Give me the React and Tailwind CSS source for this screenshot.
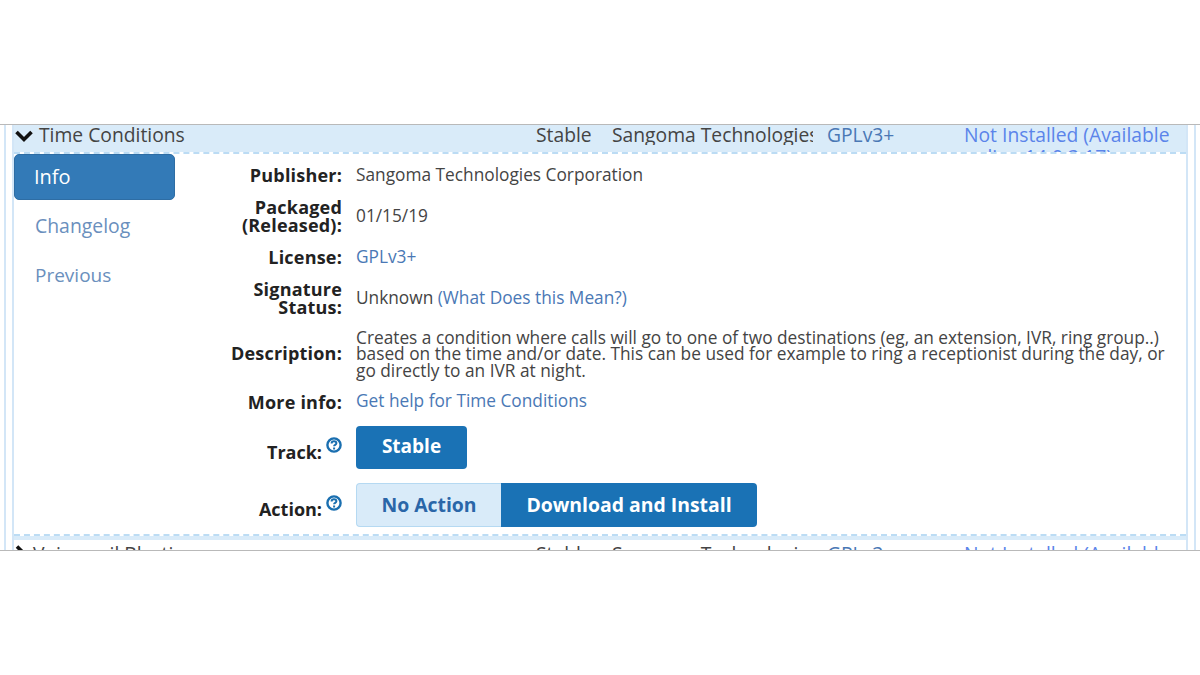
import React from 'react';

const FONT = "font-['Open_Sans','Noto_Sans',sans-serif]";

const HelpIcon = () => (
  <svg viewBox="0 0 16 16" className="w-[16px] h-[16px] shrink-0 ml-[4px] -mt-[14px]">
    <circle cx="8" cy="8" r="6.600" fill="none" stroke="#1a6fb0" strokeWidth="2.400" />
    <path d="M5.600 6.400c0-1.400 1-2.200 2.400-2.200s2.400.8 2.400 2c0 1.700-2.300 1.600-2.300 3.100" fill="none" stroke="#1a6fb0" strokeWidth="2" />
    <rect x="7.100" y="10.500" width="2" height="2" fill="#1a6fb0" />
  </svg>
);

const Row = ({ label, children, className = '', valueClass = 'leading-[16px] pb-[3px]', labelClass = 'pb-[2px]' }) => (
  <div className={`flex items-center ${className}`}>
    <div className={`w-[167px] shrink-0 pl-[40px] text-right font-bold text-[18px] leading-[18px] tracking-[0.2px] text-[#222] ${labelClass}`}>{label}</div>
    <div className={`ml-[14px] flex-1 pr-[12px] text-[17.300px] text-[#444] ${valueClass}`}>{children}</div>
  </div>
);

// 모듈 헤더 한 줄
const ModuleHeader = ({ name, license, expanded }) => (
  <div className={`flex items-start h-[27px] overflow-hidden text-[19.300px] leading-[20px] text-[#444] ${expanded ? 'bg-[#d9ebf9]' : 'bg-white'}`}>
    <div className="w-[522px] shrink-0 flex items-center">
      {expanded ? (
        <svg viewBox="0 0 20 14" className="w-[20px] h-[14px] shrink-0 mt-[1px] mr-[5px]">
          <path d="M2.500 3 10 10.500 17.500 3" fill="none" stroke="#111" strokeWidth="3.600" />
        </svg>
      ) : (
        <svg viewBox="0 0 14 20" className="w-[14px] h-[20px] shrink-0 mr-[5px]">
          <path d="M3 2.500 10.500 10 3 17.500" fill="none" stroke="#111" strokeWidth="3.600" />
        </svg>
      )}
      <span>{name}</span>
    </div>
    <div className="w-[76px] shrink-0">Stable</div>
    <div className="w-[201px] shrink-0 whitespace-nowrap overflow-hidden">Sangoma Technologies Corporation</div>
    <div className="w-[137px] shrink-0 ml-[14px] text-[#4a78b5]">{license}</div>
    <div className="w-[216px] shrink-0 -mt-[1px] leading-[22px] text-[#5b84ea]">Not Installed (Available online 14.0.3.17)</div>
  </div>
);

export default function App() {
  return (
    <div className={`h-[675px] bg-white pt-[124px] ${FONT}`}>
      <div className="h-[427px] border-y border-[#b9b9b9] overflow-hidden px-[4px]">
        <div className="h-full border-x-2 border-[#d3e6f7] px-[6px]">
          <div className="h-full border-x-2 border-[#d3e6f7]">
            <ModuleHeader name="Time Conditions" license="GPLv3+" expanded />
            <div className="flex h-[384px] border-t-2 border-b-2 border-dashed border-[#bcdcf4]">
              {/* 좌측 탭 */}
              <div className="w-[161px] shrink-0 text-[19.400px]">
                <div className="h-[46px] rounded-[5px] bg-[#337ab7] border border-[#2e6da4] text-white text-[20px] font-medium flex items-center pl-[19px] pb-[1px]">Info</div>
                <div className="h-[51px] flex items-center pl-[21px] text-[#6a8fbd]">Changelog</div>
                <div className="h-[50px] flex items-center pl-[21px] pb-[1px] text-[19px] text-[#6a8fbd]">Previous</div>
              </div>
              {/* 우측 정보 */}
              <div className="flex-1 pt-[11px]">
                <Row label="Publisher:" className="h-[22px]">Sangoma Technologies Corporation</Row>
                <Row label="Packaged (Released):" className="h-[36px] mt-[12px]">01/15/19</Row>
                <Row label="License:" className="h-[22px] mt-[12px]"><span className="text-[#4a78b5]">GPLv3+</span></Row>
                <Row label="Signature Status:" className="h-[36px] mt-[12px]">
                  Unknown <span className="text-[#4a78b5]">(What Does this Mean?)</span>
                </Row>
                <Row label="Description:" className="h-[48px] mt-[14px]" valueClass="leading-[16.500px] pb-[1px]" labelClass="pb-[4px]">
                  Creates a condition where calls will go to one of two destinations (eg, an extension, IVR, ring group..) based on the time and/or date. This can be used for example to ring a receptionist during the day, or go directly to an IVR at night.
                </Row>
                <Row label="More info:" className="h-[22px] mt-[13px]" valueClass="leading-[16px] pb-[4px]"><span className="text-[#4a78b5]">Get help for Time Conditions</span></Row>
                <div className="flex items-center h-[43px] mt-[12px]">
                  <div className="w-[167px] shrink-0 flex justify-end items-center font-bold text-[18px] text-[#222] pt-[9px]">Track:<HelpIcon /></div>
                  <div className="ml-[14px] w-[111px] h-[43px] rounded-[4px] bg-[#1a72b5] text-white font-bold text-[19px] flex items-center justify-center pb-[2px]">Stable</div>
                </div>
                <div className="flex items-center h-[44px] mt-[14px]">
                  <div className="w-[167px] shrink-0 flex justify-end items-center font-bold text-[18px] text-[#222] pt-[9px]">Action:<HelpIcon /></div>
                  <div className="ml-[14px] flex h-[44px] text-[19.400px] font-bold">
                    <div className="w-[145px] rounded-l-[4px] bg-[#d9ebf9] border border-r-0 border-[#b5d9f2] text-[#2a66a8] flex items-center justify-center">No Action</div>
                    <div className="w-[256px] rounded-r-[4px] bg-[#1a72b5] text-white flex items-center justify-center">Download and Install</div>
                  </div>
                </div>
              </div>
            </div>
            <div className="h-[4px] bg-[#d9ebf9]" />
            <div className="pt-[4px]">
              <ModuleHeader name="Voicemail Blasting" license="GPLv3" />
            </div>
          </div>
        </div>
      </div>
    </div>
  );
}
